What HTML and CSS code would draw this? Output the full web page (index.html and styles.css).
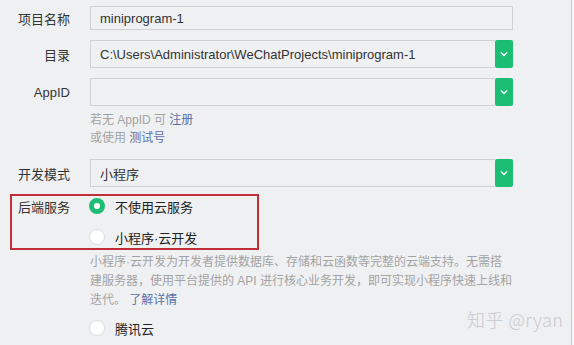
FILE: index.html
```html
<!DOCTYPE html>
<html lang="zh">
<head>
<meta charset="utf-8">
<title>新建项目</title>
<link rel="stylesheet" href="styles.css">
</head>
<body>
<div class="page">
  <div class="form">
    <div class="field first">
      <div class="label">项目名称</div>
      <div class="input short">miniprogram-1</div>
    </div>
    <div class="field">
      <div class="label">目录</div>
      <div class="select">
        <div class="input sel">C:\Users\Administrator\WeChatProjects\miniprogram-1</div>
        <div class="btn"><svg width="8" height="6" viewBox="0 0 8 6"><path d="M1 1.5 L4 4.5 L7 1.5" fill="none" stroke="#fff" stroke-width="1.4"/></svg></div>
      </div>
    </div>
    <div class="field">
      <div class="label">AppID</div>
      <div class="select">
        <div class="input sel"></div>
        <div class="btn"><svg width="8" height="6" viewBox="0 0 8 6"><path d="M1 1.5 L4 4.5 L7 1.5" fill="none" stroke="#fff" stroke-width="1.4"/></svg></div>
      </div>
    </div>
    <div class="hints">
      <div class="hint">若无 AppID 可 <span class="link">注册</span></div>
      <div class="hint">或使用 <span class="link">测试号</span></div>
    </div>
    <div class="field mode">
      <div class="label">开发模式</div>
      <div class="select">
        <div class="input sel">小程序</div>
        <div class="btn"><svg width="8" height="6" viewBox="0 0 8 6"><path d="M1 1.5 L4 4.5 L7 1.5" fill="none" stroke="#fff" stroke-width="1.4"/></svg></div>
      </div>
    </div>
    <div class="backend">
      <div class="redbox"></div>
      <div class="label blabel">后端服务</div>
      <div class="options">
        <div class="radio-row"><span class="radio on"></span><span>不使用云服务</span></div>
        <div class="radio-row second"><span class="radio"></span><span>小程序·云开发</span></div>
        <div class="desc">小程序·云开发为开发者提供数据库、存储和云函数等完整的云端支持。无需搭<br>建服务器，使用平台提供的 API 进行核心业务开发，即可实现小程序快速上线和<br>迭代。 <span class="link">了解详情</span></div>
        <div class="radio-row third"><span class="radio"></span><span>腾讯云</span></div>
      </div>
    </div>
  </div>
  <div class="side"></div>
  <div class="watermark">知乎 @ryan</div>
</div>
</body>
</html>
```

FILE: styles.css
```css
* { box-sizing: border-box; }
html, body { margin: 0; padding: 0; }
body {
  width: 574px;
  height: 345px;
  overflow: hidden;
  background: #eff0f2;
  font-family: "Liberation Sans", "Noto Sans CJK SC", sans-serif;
  color: #333;
  font-size: 13px;
}
.page {
  position: relative;
  display: flex;
  height: 345px;
}
.form {
  width: 571px;
  display: flex;
  flex-direction: column;
}
.side {
  width: 3px;
  border-left: 1px solid #c9cacc;
  background: #f6f6f7;
}
.field {
  display: flex;
  align-items: center;
  margin-top: 10px;
  height: 28px;
}
.field.first { margin-top: 6px; height: 24px; }
.field.mode { margin-top: 12px; }
.label {
  width: 70px;
  margin-right: 20px;
  text-align: right;
  color: #333;
  font-size: 13px;
}
.input {
  height: 100%;
  border: 1px solid #cfd0d2;
  background: #eff0f2;
  padding-left: 9px;
  display: flex;
  align-items: center;
  color: #333;
  font-size: 13px;
  white-space: nowrap;
}
.input.short { width: 423px; }
.select {
  display: flex;
  width: 423px;
  height: 100%;
}
.input.sel { flex: 1; border-right: none; }
.btn {
  width: 18px;
  height: 100%;
  background: #1bbe72;
  border-radius: 2px;
  display: flex;
  align-items: center;
  justify-content: center;
}
.hints {
  margin-top: 5px;
  padding-left: 90px;
}
.hint {
  height: 18px;
  line-height: 18px;
  font-size: 12px;
  color: #a3a3a3;
}
.link { color: #5b70a8; }
.backend {
  position: relative;
  display: flex;
  margin-top: 7px;
}
.redbox {
  position: absolute;
  left: 10px;
  top: 0;
  width: 249px;
  height: 56px;
  border: 2px solid #c22d38;
}
.blabel { margin-top: 5px; line-height: 18px; }
.options {
  width: 440px;
  display: flex;
  flex-direction: column;
}
.radio-row {
  display: flex;
  align-items: center;
  height: 24px;
  font-size: 13px;
  color: #222;
}
.radio-row.second { margin-top: 7px; }
.radio-row.third { margin-top: 6px; }
.radio {
  width: 16px;
  height: 16px;
  border-radius: 50%;
  border: 1px solid #dcdddf;
  background: #fff;
  margin-left: -1px;
  margin-right: 10px;
  flex: none;
}
.radio.on {
  border: 5px solid #1bbe72;
  background: #fff;
}
.desc {
  margin-top: 4px;
  white-space: nowrap;
  font-size: 12px;
  line-height: 19px;
  color: #a3a3a3;
}
.watermark {
  position: absolute;
  left: 467px;
  top: 306px;
  font-size: 18px;
  color: #c8cacd;
  letter-spacing: 0.5px;
  font-family: "Noto Sans CJK SC", "Liberation Sans", sans-serif;
  font-weight: 300;
}
```
